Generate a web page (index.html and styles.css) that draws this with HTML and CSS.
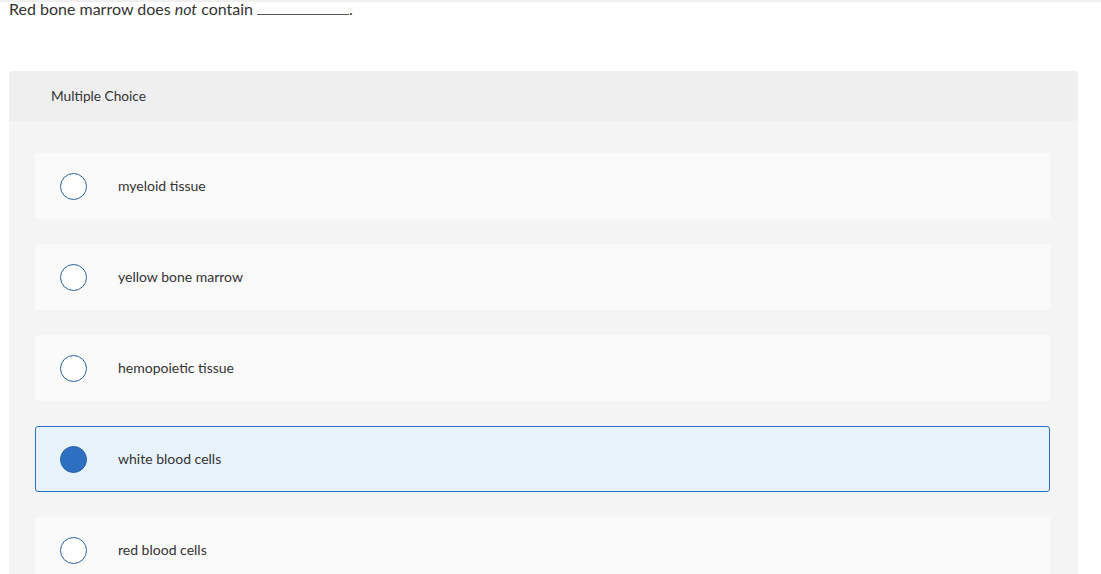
FILE: index.html
```html
<!DOCTYPE html>
<html>
<head>
<meta charset="utf-8">
<link rel="stylesheet" href="styles.css">
</head>
<body>
<div class="page">
  <p class="question">Red bone marrow does <em>not</em> contain <span class="blank"></span>.</p>
  <div class="mc">
    <div class="mc-header">Multiple Choice</div>
    <div class="options">
      <div class="option"><span class="radio"></span><span class="label">myeloid tissue</span></div>
      <div class="option"><span class="radio"></span><span class="label">yellow bone marrow</span></div>
      <div class="option"><span class="radio"></span><span class="label">hemopoietic tissue</span></div>
      <div class="option selected"><span class="radio"></span><span class="label">white blood cells</span></div>
      <div class="option"><span class="radio"></span><span class="label">red blood cells</span></div>
    </div>
  </div>
</div>
</body>
</html>
```
FILE: styles.css
```css
html, body {
  margin: 0;
  padding: 0;
  background: #ffffff;
}
body {
  font-family: "Lato", "Liberation Sans", sans-serif;
  color: #333333;
  overflow: hidden;
}
.page {
  border-top: 2px solid #f0f0f0;
}
.question {
  margin: 0 0 2px;
  padding: 0 0 0 9px;
  font-size: 16px;
  line-height: 14px;
  color: #333333;
}
.question em {
  font-style: italic;
}
.blank {
  display: inline-block;
  width: 92px;
  height: 11px;
  border-bottom: 1px solid #555555;
  vertical-align: baseline;
}
.mc {
  margin: 55px 23px 0 9px;
  background: #f4f4f4;
  border-radius: 3px;
  overflow: hidden;
}
.mc-header {
  height: 50px;
  line-height: 50px;
  background: #efefef;
  padding-left: 42px;
  font-size: 13.7px;
  color: #333333;
}
.options {
  display: flex;
  flex-direction: column;
  gap: 25px;
  padding: 32px 28px 40px 26px;
}
.option {
  height: 64px;
  display: flex;
  align-items: center;
  background: #fafafa;
  border: 1px solid transparent;
  border-radius: 3px;
  padding-left: 24px;
}
.radio {
  width: 25px;
  height: 25px;
  border: 1.5px solid #2a5f9e;
  border-radius: 50%;
  background: #ffffff;
  flex: none;
}
.label {
  margin-left: 31px;
  padding-bottom: 2px;
  font-size: 14px;
  color: #333333;
}
.option.selected {
  background: #e8f2fb;
  border-color: #2f6fc0;
}
.option.selected .radio {
  background: #2d6fc0;
  border-color: #255fa6;
}
```
